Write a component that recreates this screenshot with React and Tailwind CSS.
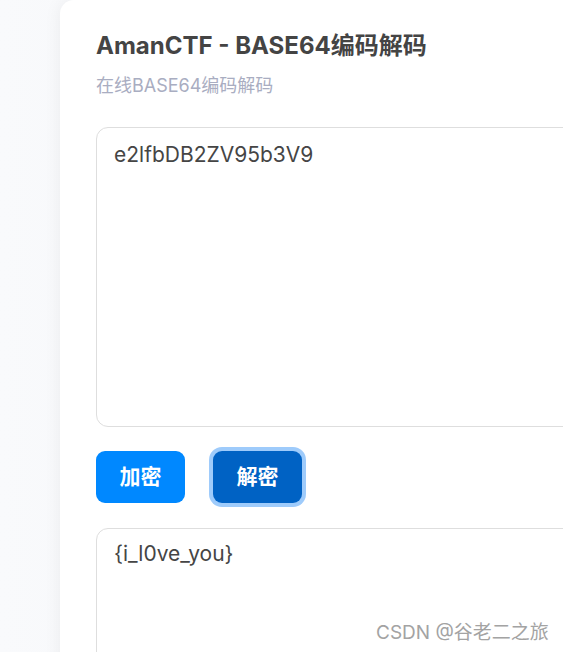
import { useState } from 'react'

export default function App() {
  const [input, setInput] = useState('e2lfbDB2ZV95b3V9')
  const [output, setOutput] = useState('{i_l0ve_you}')

  return (
    <div
      className="relative h-[652px] w-[563px] overflow-hidden bg-gradient-to-r from-[#f9fafc] to-[#f2f3f6] pl-[60px]"
      style={{ fontFamily: 'Inter, "Noto Sans CJK SC", sans-serif' }}
    >
      {/* 卡片 */}
      <div className="h-[680px] w-[640px] rounded-tl-[14px] bg-white pl-[36px] pt-[30px] shadow-[0_0_18px_rgba(0,0,0,0.06)]">
        <h1 className="text-[24px] font-bold leading-[32px] text-[#444444]">AmanCTF - BASE64编码解码</h1>
        <p className="mt-[11px] text-[18px] leading-[26px] text-[#a9adc1]">在线BASE64编码解码</p>

        <textarea
          value={input}
          onChange={(e) => setInput(e.target.value)}
          className="mt-[28px] block h-[300px] w-[560px] resize-none rounded-[12px] border border-[#dedede] px-[17px] pt-[12px] text-[21px] leading-[30px] text-[#454545] outline-none"
        />

        <div className="mt-[24px] flex items-center gap-[28px]">
          <button className="h-[52px] w-[89px] rounded-[9px] bg-[#0088ff] text-[21px] font-bold text-white">
            加密
          </button>
          <button className="h-[52px] w-[89px] rounded-[9px] bg-[#0062c4] text-[21px] font-bold text-white ring-4 ring-[#9ecbfb]">
            解密
          </button>
        </div>

        <textarea
          value={output}
          onChange={(e) => setOutput(e.target.value)}
          className="mt-[25px] block h-[300px] w-[560px] resize-none rounded-[12px] border border-[#dedede] px-[17px] pt-[10px] text-[21px] leading-[30px] text-[#454545] outline-none"
        />
      </div>

      {/* 水印 */}
      <span className="absolute left-[376px] top-[619px] text-[19px] leading-[28px] text-[#a3a3a3]">
        CSDN @谷老二之旅
      </span>
    </div>
  )
}
